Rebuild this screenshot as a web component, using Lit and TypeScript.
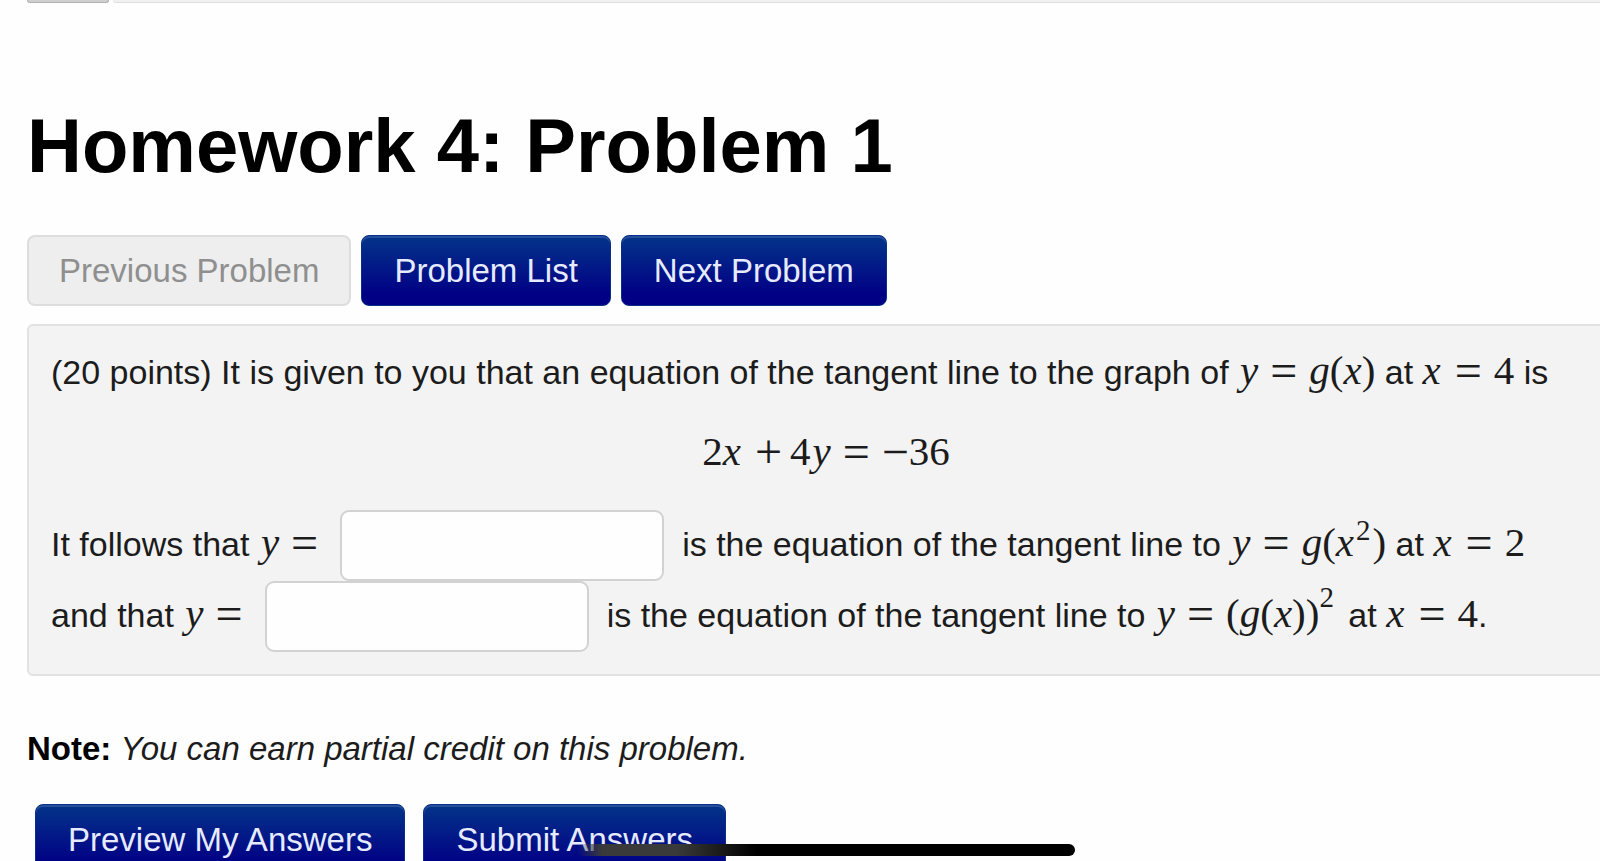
import { LitElement, html, css } from "lit";
import { customElement } from "lit/decorators.js";

const y = html`<i class="y">y</i>`;
const eq = html`<span class="op rel">=</span>`;

@customElement("app-root")
export class AppRoot extends LitElement {
  static styles = css`
    :host {
      display: block;
      height: 100vh;
      overflow: hidden;
      position: relative;
      background: #fefefe;
      color: #1c1c1c;
      font: 33px/40px "Liberation Sans", Arial, sans-serif;
    }
    .page {
      width: calc(100% + 52px);
      box-sizing: border-box;
      padding: 0 27px;
      position: relative;
      height: 100%;
    }
    .crumbs {
      display: flex;
      gap: 4px;
      height: 3px;
    }
    .toggle {
      width: 82px;
      box-sizing: border-box;
      background: #cfcfcf;
      border: 1px solid #b0b0b0;
      border-top: 0;
      border-radius: 0 0 6px 6px;
    }
    .trail {
      flex: 1;
      background: #f0f0f0;
      border-bottom: 1px solid #dedede;
      border-radius: 0 0 0 6px;
    }
    h1 {
      margin: 103px 0 49px;
      font-size: 76px;
      line-height: 80px;
      font-weight: 700;
      color: #000;
    }
    .nav {
      display: flex;
      gap: 10px;
    }
    .submit {
      display: flex;
      gap: 18px;
      padding: 0 8px;
    }
    button {
      height: 71px;
      padding: 0 32px;
      border: 1px solid #0b2f86;
      border-radius: 8px;
      background: linear-gradient(#033489, #010085 85%);
      box-shadow: inset 0 2px 0 #24509b;
      color: #e6ebff;
      font: inherit;
      white-space: nowrap;
    }
    button:disabled {
      background: #eeeeee;
      border: 2px solid #dddddd;
      padding: 0 30px;
      box-shadow: none;
      color: #8f8f8f;
    }
    .panel {
      margin-top: 18px;
      padding: 26px 22px 22px;
      border: 2px solid #e2e2e2;
      border-radius: 6px;
      background: #f3f3f3;
      font-size: 34px;
      white-space: nowrap;
    }
    .panel p {
      margin: 0;
    }
    .panel .display {
      margin: 36px 0 32px;
      line-height: 50px;
      text-align: center;
    }
    .row {
      display: flex;
      align-items: center;
      height: 71px;
    }
    .phrase {
      padding-bottom: 4px;
    }
    input {
      width: 324px;
      height: 71px;
      box-sizing: border-box;
      margin: 0 18px 0 22px;
      padding: 0 12px;
      border: 2px solid #d2d2d2;
      border-radius: 9px;
      background: #fefefe;
      font: inherit;
    }
    .math {
      font-family: "Liberation Serif", "Times New Roman", serif;
      font-size: 41px;
      line-height: 0;
    }
    .math sup {
      font-size: 29px;
      line-height: 0;
      margin: 0 2px;
      vertical-align: 16px;
    }
    .math .outer {
      margin: 0 5px 0 0;
      vertical-align: 20px;
    }
    .y {
      margin-left: 2px;
    }
    .op {
      font-size: 48px;
      vertical-align: -3px;
    }
    .rel {
      margin: 0 12px 0 14px;
    }
    .y + .rel {
      margin-left: 12px;
    }
    .bin {
      margin: 0 8px 0 14px;
    }
    .rel.end {
      margin-right: 0;
    }
    .note {
      margin: 53px 0 35px;
      color: #000;
    }
    .note i {
      color: #1c1c1c;
    }
    .home {
      position: absolute;
      bottom: 5px;
      left: 50%;
      width: 498px;
      height: 12px;
      margin-left: -249px;
      border-radius: 6px;
      background: linear-gradient(90deg, transparent, #3a3a3a 5%, #3a3a3a 20%, #000 36%);
    }
  `;

  render() {
    return html`
      <div class="page">
        <div class="crumbs">
          <div class="toggle"></div>
          <div class="trail"></div>
        </div>
        <h1>Homework 4: Problem 1</h1>
        <nav class="nav">
          <button disabled>Previous Problem</button>
          <button>Problem List</button>
          <button>Next Problem</button>
        </nav>
        <section class="panel">
          <p>
            (20 points) It is given to you that an equation of the tangent line
            to the graph of
            <span class="math">${y}${eq}<i>g</i>(<i>x</i>)</span> at
            <span class="math"><i>x</i>${eq}4</span> is
          </p>
          <p class="display">
            <span class="math"
              >2<i>x</i><span class="op bin">+</span>4${y}${eq}<span
                class="op">−</span>36</span>
          </p>
          <div class="row">
            <label class="phrase" for="first"
              >It follows that
              <span class="math">${y}<span class="op rel end">=</span></span></label>
            <input id="first" type="text" autocomplete="off" />
            <span class="phrase"
              >is the equation of the tangent line to
              <span class="math">${y}${eq}<i>g</i>(<i>x</i><sup>2</sup>)</span>
              at <span class="math"><i>x</i>${eq}2</span></span>
          </div>
          <div class="row">
            <label class="phrase" for="second"
              >and that
              <span class="math">${y}<span class="op rel end">=</span></span></label>
            <input id="second" type="text" autocomplete="off" />
            <span class="phrase"
              >is the equation of the tangent line to
              <span class="math">${y}${eq}(<i>g</i>(<i>x</i>))<sup class="outer">2</sup></span>
              at <span class="math"><i>x</i>${eq}4</span>.</span>
          </div>
        </section>
        <p class="note">
          <b>Note:</b> <i>You can earn partial credit on this problem.</i>
        </p>
        <div class="submit">
          <button>Preview My Answers</button>
          <button>Submit Answers</button>
        </div>
        <div class="home"></div>
      </div>
    `;
  }
}
